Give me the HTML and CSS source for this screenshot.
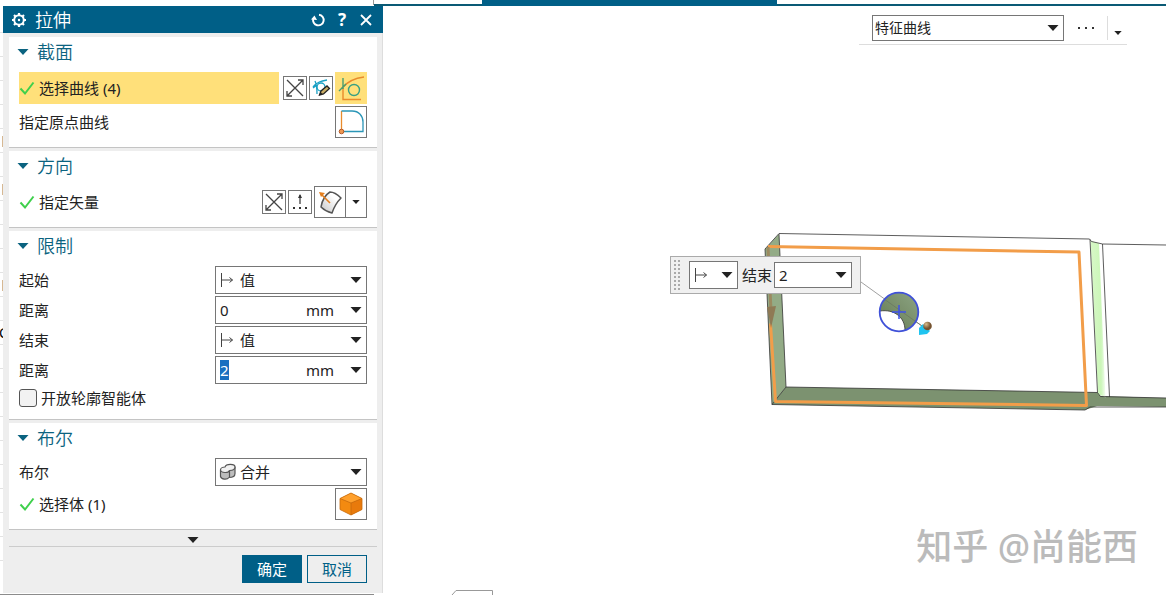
FILE: index.html
```html
<!DOCTYPE html>
<html lang="zh-CN">
<head>
    <meta charset="UTF-8">
    <meta name="viewport" content="width=device-width, initial-scale=1.0">
    <title>拉伸</title>
    <link rel="stylesheet" href="styles.css">
</head>
<body>
    <!-- shared icons -->
    <svg class="defs" width="0" height="0" aria-hidden="true">
        <symbol id="arrow" viewBox="0 0 12 6"><path d="M0.5 0h11L6 6z" fill="currentColor"/></symbol>
        <symbol id="check" viewBox="0 0 16 16"><path d="M1.500 8.500l4.500 5L14.500 2.500" fill="none" stroke="#3fd04c" stroke-width="2"/></symbol>
        <symbol id="start" viewBox="0 0 14 16"><path d="M1.5 1v14M1.5 8h11M9.5 5.5L12.5 8l-3 2.5" fill="none" stroke="#444" stroke-width="1"/></symbol>
        <symbol id="reverse" viewBox="0 0 22 22">
            <path d="M3 3l16 16M19 3L3 19M14 3h5v5M3 14v5h5" fill="none" stroke="#444" stroke-width="1.3"/>
        </symbol>
    </svg>

    <main class="workspace">
        <div class="tabs"><div class="tab-active"></div></div>

        <div class="toolbar">
            <div class="field filter">
                <select aria-label="曲线规则"><option>特征曲线</option></select>
                <svg class="arrow"><use href="#arrow"/></svg>
            </div>
            <button class="more" type="button" aria-label="更多">
                <svg width="18" height="4" viewBox="0 0 18 4"><path d="M1 1h2v2H1zM8 1h2v2H8zM15 1h2v2h-2z" fill="#333"/></svg>
            </button>
            <button class="overflow" type="button" aria-label="工具条选项">
                <svg width="8" height="4" viewBox="0 0 12 6"><use href="#arrow"/></svg>
            </button>
        </div>

        <svg class="scene" viewBox="0 0 1166 595" preserveAspectRatio="xMinYMin slice" aria-hidden="true">
            <defs>
                <linearGradient id="fillet"><stop offset="0" stop-color="#d8f8c8"/><stop offset="0.7" stop-color="#cbf6b8"/><stop offset="1" stop-color="#f4fdf0"/></linearGradient>
                <linearGradient id="hole" x1="0" y1="1" x2="1" y2="0"><stop offset="0.3" stop-color="#70865f"/><stop offset="1" stop-color="#8da484"/></linearGradient>
                <radialGradient id="ball" cx="0.35" cy="0.3"><stop offset="0" stop-color="#d9bd8d"/><stop offset="1" stop-color="#75532f"/></radialGradient>
            </defs>
            <!-- list behind the dialog -->
            <g stroke="#e3e3e3"><path d="M0 32.5h3M0 56.5h3M0 80.5h3M0 104.5h3M0 128.5h3M0 152.5h3M0 176.5h3M0 200.5h3M0 224.5h3M0 248.5h3M0 272.5h3M0 296.5h3M0 320.5h3M0 344.5h3M0 368.5h3M0 392.5h3M0 416.5h3M0 440.5h3M0 464.5h3M0 488.5h3M0 512.5h3M0 536.5h3M0 560.5h3"/></g>
            <path d="M2.5 136v11M2.5 184v11M2.5 280v11" stroke="#d6b893"/>
            <text x="-1" y="338" class="list-text">C</text>
            <path d="M0 594.5h374" stroke="#8c8c8c"/>
            <path d="M373.5 0v5" stroke="#999"/>
            <path d="M452 595l4-4.5h36.500v4.500" fill="none" stroke="#999"/>
            <!-- pocket walls -->
            <path d="M779 234l-14 15 7 155.500 14-17.500z" fill="#93ab86"/>
            <path d="M786 387l311.500 5.500 3 3.500 65.500 2v9l-69-1-12 4-313-5.500z" fill="#7c9270"/>
            <path d="M1090.500 241l8.500 2.500 6.500 154-7.500-3.500z" fill="url(#fillet)"/>
            <g fill="none" stroke="#333" stroke-width="0.800">
                <path d="M765 249l14-15.500 310.500 5.500 2 2.500 11 2.500 63.500 1"/>
                <path d="M779 234l7 153 311.500 5.500 3 4 65.500 1.500"/>
                <path d="M765 249l7 155.500 313 5.500 5-3 76 0M772 404.500l14-17.500"/>
                <path d="M1090 239.500l7.500 153M1102.500 244l7 153"/>
            </g>
            <path d="M768 246.500l311 5.500 7.500 153.500-311-4-5-78" fill="none" stroke="#f29d49" stroke-width="3" stroke-linejoin="round"/>
            <path d="M768 247l3 64" stroke="#9b8a60" stroke-width="3"/>
            <path d="M767 307l9-1-5 22z" fill="#8f7a55"/>
            <!-- hole and drag handle -->
            <path d="M861 282l61 44" stroke="#888" stroke-width="0.800"/>
            <circle cx="899" cy="312" r="19.300" fill="url(#hole)"/>
            <path d="M880 311C894 309 905 317 905 330.500C893 335 879 326 880 311z" fill="#fff"/>
            <path d="M880 311C894 309 905 317 905 330.500" fill="none" stroke="#333" stroke-width="0.800"/>
            <path d="M884 299l38 27" stroke="#69775f" stroke-width="0.800"/>
            <circle cx="899" cy="312" r="19.300" fill="none" stroke="#3f51d8" stroke-width="1.800"/>
            <path d="M892 312h14M899 305v14" stroke="#3f51e8" stroke-width="1.500"/>
            <path d="M919 328l4-4 7 7-3 3-8 1z" fill="#1fc4f0"/>
            <circle cx="927.500" cy="326" r="4.300" fill="url(#ball)"/>
        </svg>

        <p class="watermark">知乎 @尚能西</p>

        <div class="input-bar">
            <div class="grip"></div>
            <div class="field bar-type">
                <svg width="14" height="16"><use href="#start"/></svg>
                <select aria-label="结束类型"><option></option></select>
                <svg class="arrow"><use href="#arrow"/></svg>
            </div>
            <label for="barEnd">结束</label>
            <div class="field bar-value">
                <input id="barEnd" type="text" value="2">
                <svg class="arrow"><use href="#arrow"/></svg>
            </div>
        </div>

        <form class="dialog">
            <header class="titlebar">
                <svg width="16" height="16" viewBox="0 0 16 16">
                    <circle cx="8" cy="8" r="4.800" fill="none" stroke="#fff" stroke-width="2"/>
                    <path d="M8 1v2.500M8 12.500V15M1 8h2.500M12.500 8H15M3 3l1.700 1.700M11.300 11.300L13 13M13 3l-1.700 1.700M4.700 11.300L3 13" stroke="#fff" stroke-width="2.200"/>
                    <circle cx="8" cy="8" r="1.200" fill="#fff"/>
                </svg>
                <h1>拉伸</h1>
                <button type="button" aria-label="重置">
                    <svg width="14" height="14" viewBox="0 0 14 14"><path d="M8 1.800A5.300 5.300 0 1 1 2.300 5.500" fill="none" stroke="#fff" stroke-width="1.900"/><path d="M0 6.500L3.500 2.500 6 7z" fill="#fff"/></svg>
                </button>
                <button type="button" class="help">?</button>
                <button type="button" aria-label="关闭">
                    <svg width="12" height="12" viewBox="0 0 12 12"><path d="M1 1l10 10M11 1L1 11" stroke="#fff" stroke-width="1.800"/></svg>
                </button>
            </header>

            <section>
                <h2><svg class="arrow"><use href="#arrow"/></svg>截面</h2>
                <div class="row">
                    <span class="name selected"><svg width="16" height="16"><use href="#check"/></svg>选择曲线 (4)</span>
                    <button type="button" class="tool" aria-label="反向"><svg width="22" height="22"><use href="#reverse"/></svg></button>
                    <button type="button" class="tool" aria-label="绘制截面">
                        <svg width="22" height="22" viewBox="0 0 22 22">
                            <path d="M3 10C7 5 11 4 17 3M5 4c2 4 2 7 2 13M3 11l4-3" fill="none" stroke="#1aa0c4" stroke-width="1.300"/>
                            <circle cx="11" cy="10" r="4" fill="none" stroke="#1aa0c4" stroke-width="1.300"/>
                            <path d="M9.500 18l1.500-4 6-5 2.500 2.500-6 5.500z" fill="#c8ac65" stroke="#222" stroke-width="1.300"/>
                            <path d="M9 18.500l1.500-3.500 2 2z" fill="#222"/>
                        </svg>
                    </button>
                    <button type="button" class="tool large active" aria-label="曲线">
                        <svg width="32" height="32" viewBox="0 0 32 32" fill="none" stroke-width="1.400">
                            <path d="M7 16C13 9 20 6 29 5M8 16v11.500h18" stroke="#e98b2c"/>
                            <path d="M8 6v11M4 19l7-7" stroke="#4a9d70"/>
                            <circle cx="19" cy="18" r="5.500" stroke="#399f83"/>
                        </svg>
                    </button>
                </div>
                <div class="row">
                    <span class="name">指定原点曲线</span>
                    <button type="button" class="tool large" aria-label="原点曲线">
                        <svg width="30" height="30" viewBox="0 0 30 30" fill="none" stroke-width="1.300">
                            <path d="M5.500 4v21" stroke="#e98b2c"/>
                            <path d="M5.500 4H16c7 0 11 5 11 11v9.500H6" stroke="#2b96b7"/>
                            <circle cx="5.500" cy="24.500" r="2.300" fill="#ee9852" stroke="#b45a28" stroke-width="1"/>
                        </svg>
                    </button>
                </div>
            </section>

            <section>
                <h2><svg class="arrow"><use href="#arrow"/></svg>方向</h2>
                <div class="row">
                    <span class="name"><svg width="16" height="16"><use href="#check"/></svg>指定矢量</span>
                    <button type="button" class="tool" aria-label="反向"><svg width="22" height="22"><use href="#reverse"/></svg></button>
                    <button type="button" class="tool" aria-label="矢量对话框">
                        <svg width="22" height="22" viewBox="0 0 22 22"><path d="M11 4v9" stroke="#333" stroke-width="1.200"/><path d="M9 7l2-4 2 4z" fill="#333"/><path d="M4 16h2v2H4zM10 16h2v2h-2zM16 16h2v2h-2z" fill="#333"/></svg>
                    </button>
                    <div class="split">
                        <button type="button" aria-label="面/平面法向">
                            <svg width="30" height="30" viewBox="0 0 30 30">
                                <defs><linearGradient id="sheet" x1="1" y1="0" x2="0" y2="1"><stop offset="0.300" stop-color="#fff"/><stop offset="1" stop-color="#c5c5c5"/></linearGradient></defs>
                                <path d="M15 5c4 0 8 3 11 6-4 4-7 9-9 15-4-1-8-3-11-6 1-6 4-12 9-15z" fill="url(#sheet)" stroke="#555" stroke-width="1.500" stroke-linejoin="round"/>
                                <path d="M15 16L6 7" stroke="#e47e1c" stroke-width="1.600"/><path d="M4 5l6 1-4 4z" fill="#e47e1c"/>
                            </svg>
                        </button>
                        <button type="button" aria-label="矢量类型"><svg width="8" height="4" viewBox="0 0 12 6"><use href="#arrow"/></svg></button>
                    </div>
                </div>
            </section>

            <section>
                <h2><svg class="arrow"><use href="#arrow"/></svg>限制</h2>
                <div class="row">
                    <label class="name" for="startType">起始</label>
                    <div class="field">
                        <svg width="14" height="16"><use href="#start"/></svg>
                        <select id="startType"><option>值</option></select>
                        <svg class="arrow"><use href="#arrow"/></svg>
                    </div>
                </div>
                <div class="row">
                    <label class="name" for="startDistance">距离</label>
                    <div class="field">
                        <input id="startDistance" type="text" value="0">
                        <span class="unit">mm</span>
                        <svg class="arrow"><use href="#arrow"/></svg>
                    </div>
                </div>
                <div class="row">
                    <label class="name" for="endType">结束</label>
                    <div class="field">
                        <svg width="14" height="16"><use href="#start"/></svg>
                        <select id="endType"><option>值</option></select>
                        <svg class="arrow"><use href="#arrow"/></svg>
                    </div>
                </div>
                <div class="row">
                    <label class="name" for="endDistance">距离</label>
                    <div class="field">
                        <input id="endDistance" type="text" value="2">
                        <span class="unit">mm</span>
                        <svg class="arrow"><use href="#arrow"/></svg>
                    </div>
                </div>
                <div class="row check-row">
                    <input id="openProfile" type="checkbox">
                    <label for="openProfile">开放轮廓智能体</label>
                </div>
            </section>

            <section>
                <h2><svg class="arrow"><use href="#arrow"/></svg>布尔</h2>
                <div class="row">
                    <label class="name" for="boolean">布尔</label>
                    <div class="field solid">
                        <svg width="18" height="18" viewBox="0 0 18 18" stroke="#555" stroke-width="1.200" stroke-linejoin="round">
                            <path d="M1.500 7v6.500C2.500 16.500 8 17 10 14.500c4 0 6-1.500 6-4V4L10 8z" fill="#bdbdbd"/>
                            <path d="M1.500 7C1.500 5 4 4 6 4c1-3.500 10-3.500 10 0 0 2.500-2.500 3.500-5.500 3.500C9.500 10.500 2 10 1.500 7z" fill="#f1f1f1"/>
                            <path d="M10.500 8v6" fill="none"/>
                        </svg>
                        <select id="boolean"><option>合并</option></select>
                        <svg class="arrow"><use href="#arrow"/></svg>
                    </div>
                </div>
                <div class="row">
                    <span class="name"><svg width="16" height="16"><use href="#check"/></svg>选择体 (1)</span>
                    <button type="button" class="tool large" aria-label="体">
                        <svg width="30" height="30" viewBox="0 0 30 30">
                            <path d="M15 4l11 5.500v11L15 26 4 20.500v-11z" fill="#f38a10"/>
                            <path d="M15 4l11 5.500L15 14 4 9.500z" fill="#ffa02c"/>
                            <path d="M15 14l11-4.500v11L15 26z" fill="#e87a0c"/>
                            <path d="M15 4l11 5.500v11L15 26 4 20.500v-11zM4 9.500L15 14l11-4.500M15 14v12" fill="none" stroke="#c76a0c" stroke-width="0.800"/>
                        </svg>
                    </button>
                </div>
            </section>

            <button type="button" class="expand" aria-label="更多选项"><svg class="arrow"><use href="#arrow"/></svg></button>

            <footer>
                <button type="submit" class="ok">确定</button>
                <button type="button" class="cancel">取消</button>
            </footer>
        </form>
    </main>

    <script>
        // the end distance is ready to be typed over
        var endDistance = document.getElementById('endDistance');
        endDistance.focus();
        endDistance.select();
    </script>
</body>
</html>
```
FILE: styles.css
```css
* {
    box-sizing: border-box;
}

body {
    margin: 0;
    background-color: #fff;
    color: #222;
    font-family: "Noto Sans", "Noto Sans CJK SC", sans-serif;
    font-size: 15px;
    line-height: 20px;
}

button, input, select {
    margin: 0;
    padding: 0;
    border: none;
    border-radius: 0;
    background: none;
    color: inherit;
    font: inherit;
    outline: none;
}

button {
    display: flex;
    align-items: center;
    justify-content: center;
    cursor: pointer;
}

svg {
    display: block;
    flex: none;
}

.defs {
    position: absolute;
}

.arrow {
    width: 12px;
    height: 6px;
    pointer-events: none;
}

.workspace {
    position: relative;
    min-height: 100vh;
    overflow: hidden;
}

/* Tab strip and top toolbar */
.tabs {
    height: 6px;
    margin-left: 374px;
    padding-left: 108px;
    border-bottom: 2px solid #0a5a75;
}

.tab-active {
    width: 295px;
    height: 6px;
    background-color: #005f87;
}

.toolbar {
    position: relative;
    z-index: 1;
    display: flex;
    align-items: center;
    width: 268px;
    margin: 6px 39px 0 auto;
    padding: 3px 0 3px 13px;
    border-bottom: 1px solid #ddd;
}

.more {
    width: 43px;
    height: 24px;
}

.overflow {
    width: 20px;
    height: 24px;
    padding-top: 10px;
    border-left: 1px solid #ddd;
}

/* Boxed inputs and drop-downs */
.field {
    display: flex;
    align-items: center;
    width: 152px;
    height: 28px;
    padding: 0 4px;
    border: 1px solid #767676;
    background-color: #fff;
}

.field select, .field input {
    flex: 1;
    width: 0;
    min-width: 0;
    appearance: none;
}

.field svg + select {
    margin-left: 6px;
}

.field.solid {
    padding-left: 3px;
}

.field.solid svg + select {
    margin-left: 3px;
}

.unit {
    margin-right: 16px;
}

.field.filter {
    width: 192px;
    height: 26px;
    padding-left: 2px;
    font-size: 14px;
}

input::selection {
    background-color: #1a6fc0;
    color: #fff;
}

/* Graphics window */
.scene {
    position: absolute;
    top: 0;
    left: 0;
    width: 100%;
    height: 100%;
}

.list-text {
    font-size: 14px;
}

.watermark {
    position: absolute;
    right: 28px;
    bottom: 28px;
    margin: 0;
    color: #bbb;
    font-size: 36px;
    font-weight: 500;
    line-height: 40px;
}

.input-bar {
    position: absolute;
    top: 256px;
    left: 670px;
    display: flex;
    align-items: center;
    height: 38px;
    padding: 0 8px 0 2px;
    border: 1px solid #aaa;
    background-color: #f0f0f0;
}

.grip {
    width: 8px;
    height: 32px;
    margin-right: 8px;
    background-image: radial-gradient(circle at 2px 2px, #aaa 1px, transparent 1px);
    background-size: 4px 4px;
}

.input-bar label {
    margin: 0 2px 0 4px;
}

.field.bar-type {
    width: 49px;
}

.field.bar-value {
    width: 78px;
    height: 26px;
}

/* Dialog */
.dialog {
    position: absolute;
    top: 6px;
    left: 3px;
    width: 380px;
    border-right: 1px solid #ddd;
    background-color: #eee;
}

.titlebar {
    display: flex;
    align-items: center;
    height: 27px;
    margin: 0 -1px 4px 0;
    padding: 0 5px 0 8px;
    background-color: #005f87;
    color: #fff;
}

.titlebar h1 {
    flex: 1;
    margin: 0 0 0 8px;
    font-size: 18px;
    font-weight: 350;
}

.titlebar button {
    width: 24px;
    height: 24px;
}

.titlebar .help {
    font-size: 17px;
    font-weight: bold;
}

section {
    margin: 0 5px 3px 6px;
    padding: 0 10px 9px;
    border-bottom: 1px solid #c4c4c4;
    background-color: #fff;
}

h2 {
    display: flex;
    align-items: center;
    gap: 8px;
    height: 30px;
    margin: 0 0 5px -2px;
    color: #0b6380;
    font-size: 18px;
    font-weight: 350;
}

.row {
    display: flex;
    align-items: center;
    gap: 2px;
}

.row + .row {
    margin-top: 2px;
}

.name {
    display: flex;
    flex: 1;
    align-items: center;
    gap: 4px;
}

.selected {
    height: 32px;
    margin-right: 2px;
    background-color: #ffe07a;
}

.tool {
    width: 24px;
    height: 24px;
    border: 1px solid #767676;
    background-color: #fff;
}

.large {
    width: 32px;
    height: 32px;
}

.active {
    border: none;
    background-color: #ffe07a;
}

.split {
    display: flex;
    height: 32px;
    border: 1px solid #767676;
}

.split button {
    width: 30px;
}

.split button + button {
    width: 21px;
    border-left: 1px solid #767676;
}

.check-row {
    gap: 4px;
    height: 24px;
}

.check-row input {
    width: 18px;
    height: 18px;
    border: 1px solid #555;
    border-radius: 3px;
    background-color: #f2f2f2;
    appearance: none;
}

.check-row input:checked {
    background-color: #005f87;
}

.expand {
    width: 368px;
    height: 17px;
    margin: -3px 5px 0 6px;
    padding-top: 4px;
    border-bottom: 1px solid #ccc;
}

footer {
    display: flex;
    justify-content: flex-end;
    gap: 5px;
    padding: 8px 15px 10px;
}

footer button {
    width: 60px;
    height: 28px;
    border: 1px solid #005f87;
}

.ok {
    background-color: #005f87;
    color: #fff;
}

.cancel {
    color: #005f87;
}
```
